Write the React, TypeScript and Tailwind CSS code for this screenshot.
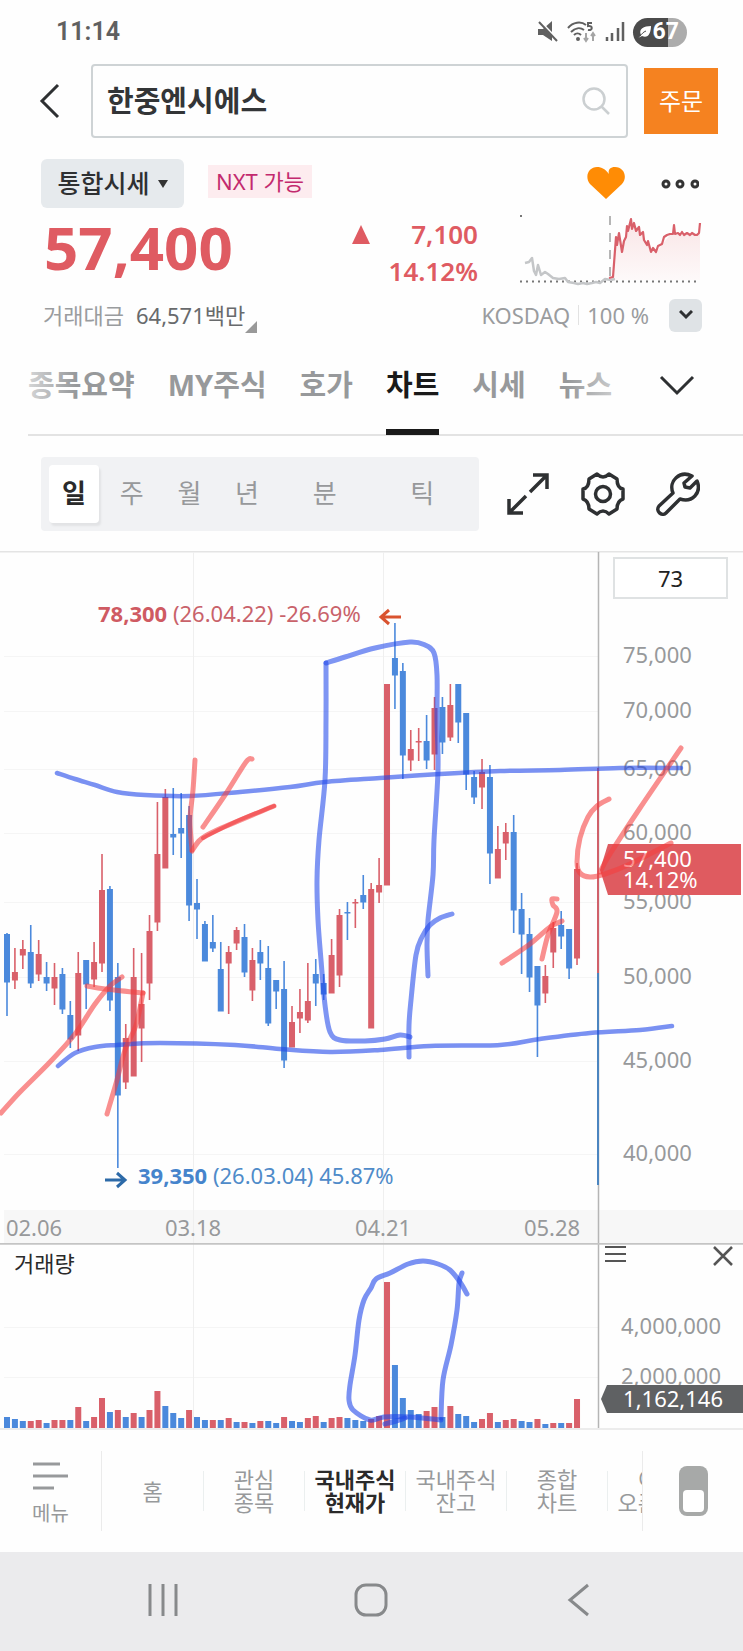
import React from "react";

type Point = [number, number];
type Candle = ["R" | "B", number, number, number, number];

const RED = "#d9606a";
const BLUE = "#4b89dc";
const FIRST_X = 7;
const STEP = 7.917;

// Direction, then high, body top, body bottom and low on the chart's y scale.
const candles: Candle[] = [
  ["B", 933, 934, 982, 1016], ["R", 948, 972, 980, 989], ["R", 940, 949, 955, 969],
  ["B", 925, 952, 983, 988], ["R", 940, 954, 974, 981], ["B", 962, 977, 983, 991],
  ["R", 963, 977, 988, 1005], ["B", 968, 974, 1009, 1014], ["B", 1001, 1015, 1039, 1048],
  ["R", 952, 973, 1035, 1051], ["B", 960, 960, 984, 1009], ["R", 942, 962, 979, 987],
  ["R", 854, 890, 963, 972], ["B", 886, 889, 1000, 1011], ["B", 963, 977, 1095, 1168],
  ["R", 1024, 1038, 1082, 1089], ["R", 948, 977, 1076, 1076], ["R", 953, 1004, 1028, 1062],
  ["R", 915, 931, 983, 1000], ["R", 802, 854, 922, 931], ["R", 789, 797, 868, 868],
  ["B", 788, 834, 837, 855], ["B", 793, 828, 833, 858], ["B", 806, 815, 905, 921],
  ["B", 879, 903, 909, 939], ["B", 921, 924, 961, 961], ["B", 915, 942, 948, 952],
  ["B", 942, 969, 1011, 1011], ["R", 946, 952, 963, 1014], ["R", 927, 930, 943, 950],
  ["B", 924, 937, 972, 977], ["R", 948, 960, 990, 1001], ["B", 940, 952, 963, 980],
  ["B", 946, 968, 1023, 1026], ["B", 980, 980, 991, 1009], ["B", 961, 989, 1060, 1068],
  ["R", 1006, 1022, 1047, 1047], ["R", 989, 1012, 1018, 1033], ["R", 963, 1001, 1020, 1023],
  ["B", 959, 974, 983, 1006], ["B", 974, 983, 994, 1000], ["R", 939, 955, 993, 993],
  ["R", 909, 915, 975, 987], ["B", 902, 912, 913, 940], ["R", 899, 902, 903, 928],
  ["B", 875, 895, 902, 909], ["R", 883, 889, 1028, 1028], ["R", 858, 885, 892, 903],
  ["R", 684, 684, 885, 885], ["B", 623, 658, 675, 709], ["B", 663, 671, 755, 779],
  ["R", 730, 749, 760, 771], ["R", 728, 741, 742, 761], ["B", 715, 741, 760, 769],
  ["R", 697, 708, 754, 770], ["B", 697, 707, 742, 754], ["R", 684, 705, 737, 741],
  ["B", 684, 684, 722, 743], ["B", 713, 713, 774, 790], ["B", 771, 777, 797, 804],
  ["R", 759, 772, 787, 809], ["B", 765, 777, 853, 884], ["R", 826, 849, 878, 878],
  ["R", 823, 832, 843, 860], ["B", 815, 832, 910, 933], ["B", 893, 909, 934, 974],
  ["B", 918, 934, 977, 992], ["B", 966, 966, 1005, 1057], ["R", 965, 976, 993, 1003],
  ["R", 922, 928, 952, 968], ["B", 911, 925, 936, 949], ["B", 929, 929, 968, 979],
  ["R", 863, 869, 958, 965],
];

const volumes: string =
  "B11 B9 B7 R7 R8 B5 R8 R8 B8 R21 B7 R11 R30 B16 R18 B11 R15 B11 R18 R37 B22 B15 B10 R18 B11 B8 R8 B8 R10 B6 R6 B5 R7 B7 B5 R11 B7 B6 R10 R12 B6 R10 R11 B10 B8 B7 R9 R12 R146 B63 B30 B18 B14 R17 R21 B11 R22 B14 B12 B6 R9 R15 B6 R8 R9 B7 B6 R9 B4 R5 B5 R5 R29";

const priceLevels: [string, number][] = [
  ["75,000", 657], ["70,000", 712], ["65,000", 770], ["60,000", 834],
  ["55,000", 903], ["50,000", 978], ["45,000", 1062], ["40,000", 1155],
];

const blueStrokes: Point[][] = [
  [[57, 773], [75, 779], [95, 785], [117, 792], [145, 795], [190, 796], [240, 792], [290, 787], [325, 782], [380, 778], [440, 774], [500, 771], [560, 770], [620, 768], [681, 768]],
  [[58, 1066], [75, 1053], [95, 1047], [117, 1045], [160, 1043], [235, 1045], [280, 1049], [330, 1052], [380, 1050], [430, 1046], [500, 1045], [540, 1039], [590, 1033], [640, 1030], [672, 1026]],
];
const blueBoxStrokes: Point[][] = [
  [[326, 663], [345, 657], [375, 648], [410, 642], [425, 645], [434, 653], [437, 675], [437, 720], [438, 770], [434, 840], [433, 875], [428, 920], [427, 945], [428, 976]],
  [[326, 663], [326, 720], [325, 780], [319, 840], [317, 880], [318, 920], [321, 960], [325, 1005], [330, 1032], [340, 1040], [365, 1041], [385, 1039], [400, 1035], [410, 1037]],
  [[409, 1057], [409, 1025], [411, 1000], [416, 955], [422, 937], [430, 925], [440, 918], [452, 914]],
];
const redStrokes: Point[][] = [
  [[195, 760], [193, 790], [190, 820], [192, 850]],
  [[252, 759], [246, 762], [225, 795], [203, 827]],
  [[192, 851], [200, 840], [215, 831], [274, 806]],
  [[1, 1113], [20, 1092], [50, 1062], [75, 1034], [95, 1004], [110, 986], [122, 977]],
  [[87, 986], [105, 989], [143, 993]],
  [[143, 993], [136, 1025], [125, 1050], [117, 1080], [107, 1114]],
  [[502, 963], [530, 944], [550, 927], [562, 921]],
  [[542, 959], [548, 935], [557, 912], [553, 905], [552, 899], [557, 899]],
  [[609, 799], [597, 806], [588, 817], [580, 838], [577, 862], [580, 873], [590, 877], [605, 874], [630, 864], [671, 843]],
  [[681, 748], [640, 808], [610, 854], [600, 872]],
];
const volumeStrokes: Point[][] = [
  [[462, 1273], [459, 1283], [457, 1310], [451, 1345], [443, 1380], [441, 1418]],
  [[467, 1294], [460, 1282], [450, 1270], [438, 1264], [423, 1261], [408, 1264], [390, 1273], [376, 1279], [371, 1288], [364, 1300], [359, 1320], [355, 1355], [350, 1385], [349, 1400], [353, 1410], [370, 1420], [384, 1417], [410, 1417], [441, 1420]],
  [[385, 1424], [396, 1421], [405, 1418]],
];

function smooth(points: Point[]): string {
  const at = (i: number) => points[Math.max(0, Math.min(points.length - 1, i))];
  let d = `M${points[0][0]} ${points[0][1]}`;
  for (let i = 0; i < points.length - 1; i++) {
    const [a, b, c, e] = [at(i - 1), at(i), at(i + 1), at(i + 2)];
    d += `C${b[0] + (c[0] - a[0]) / 6} ${b[1] + (c[1] - a[1]) / 6} ${c[0] - (e[0] - b[0]) / 6} ${c[1] - (e[1] - b[1]) / 6} ${c[0]} ${c[1]}`;
  }
  return d;
}

function Pen({ strokes, color, width, opacity }: { strokes: Point[][]; color: string; width: number; opacity: number }) {
  return (
    <g fill="none" stroke={color} strokeWidth={width} strokeOpacity={opacity} strokeLinecap="round" strokeLinejoin="round">
      {strokes.map((s, i) => (
        <path key={i} d={smooth(s)} />
      ))}
    </g>
  );
}

function StatusBar() {
  return (
    <div className="flex h-16 items-center justify-between px-14 text-[#606060]">
      <span className="font-[Roboto] text-[25px] font-semibold">11:14</span>
      <div className="flex items-center gap-2">
        <svg width="22" height="22" viewBox="0 0 22 22" aria-label="무음">
          <path d="M1 8h5l9-8v20l-9-6H1z" fill="#606060" />
          <path d="M3 0l19 20" stroke="#fff" strokeWidth="2" />
          <path d="M2 1l18 19" stroke="#606060" strokeWidth="2" />
        </svg>
        <svg width="30" height="22" viewBox="0 0 30 22" fill="none" stroke="#606060" strokeWidth="2" aria-label="와이파이">
          <path d="M1 7c5-6 13-7 18-3M4 11c4-4 9-5 13-2M7 14c2-2 5-2 7 0" />
          <circle cx="11" cy="18" r="1" fill="#606060" />
          <path d="M25 2h-4v3c5-1 5 5 0 4" strokeWidth="2" />
          <path d="M19 12v7m-2-2l2 3 2-3M26 20v-7m-2 2l2-3 2 3" stroke="#a5a5a5" />
        </svg>
        <svg width="20" height="22" viewBox="0 0 20 22" stroke="#606060" strokeWidth="2.500" aria-label="신호">
          <path d="M2 16v4M7 12v8M13 7v13M18 1v19" />
        </svg>
        <div className="flex h-[29px] items-center gap-px overflow-hidden rounded-full bg-linear-to-r from-[#4b4b4b] from-65% to-[#acacac] to-65% pl-1 pr-2 font-[Roboto] text-[23px] font-bold text-white">
          <svg width="15" height="14" viewBox="0 0 15 14">
            <path d="M1 13c2-1 2-2 3-3-3-6 3-9 10-9 0 7-3 13-9 10" fill="#fff" />
            <path d="M3 11c2-2 3-4 6-5" stroke="#4b4b4b" fill="none" />
          </svg>
          67
        </div>
      </div>
    </div>
  );
}

function Header() {
  return (
    <header className="flex items-center pl-[38px] pr-[25px]">
      <button aria-label="뒤로" className="w-[53px]">
        <svg width="24" height="36" viewBox="0 0 24 36" fill="none" stroke="#2e3032" strokeWidth="3">
          <path d="M20 2L4 18l16 16" />
        </svg>
      </button>
      <label className="flex h-[74px] flex-1 items-center rounded-sm border-2 border-[#ced3d5] pr-4 pl-[14px]">
        <input aria-label="종목 검색" defaultValue="한중엔시에스" className="w-full min-w-0 flex-1 text-[29px] font-bold text-[#333537] outline-none" />
        <svg width="28" height="28" viewBox="0 0 28 28" fill="none" stroke="#cbcfd1" strokeWidth="2.5">
          <circle cx="12" cy="12" r="10.500" />
          <path d="M19 19l8 8" />
        </svg>
      </label>
      <button className="ml-4 h-[66px] w-[74px] bg-[#f58220] text-[24px] text-white">주문</button>
    </header>
  );
}

function Sparkline() {
  return (
    <svg width="190" height="76" viewBox="516 212 190 76" fill="none" strokeLinejoin="round" aria-label="당일 추이">
      <defs>
        <linearGradient id="area" x1="0" y1="0" x2="0" y2="1">
          <stop offset="0" stopColor="#e05a5f" stopOpacity="0.150" />
          <stop offset="1" stopColor="#e05a5f" stopOpacity="0.030" />
        </linearGradient>
      </defs>
      <path d="M520 217h2" stroke="#777" strokeWidth="2" />
      <path d="M610 217v64" stroke="#b5b5b5" strokeWidth="2" strokeDasharray="9 8" />
      <path d="M520 282.500h178" stroke="#777" strokeWidth="2" strokeDasharray="2 4" />
      <path d="M613 279L616 240L622 248L631 222L640 232L651 252L657 252L670 236L700 234V281H613z" fill="url(#area)" />
      <path d="M525 264l4-1 3-4 2 13 2 4 2-10 3 10 4-3 3 2 5 4 6 1 6-1 3 4 6 1 4 1 5-1 4 1 5-1 4-1 4 1 5-4 6 1 4-1" stroke="#c4c6c8" strokeWidth="2.500" />
      <path
        d="M609 279L613 278L616 238L617 246L619 234L622 253L624 242L626 238L627 227L628 232L631 220L632 230L634 224L636 232L639 228L640 236L643 233L644 241L647 246L648 242L651 253L653 249L656 253L658 247L662 245L664 238L667 236L670 235L673 235L674 226L675 235L678 234L680 236L682 233L684 236L687 234L690 236L692 234L695 236L697 236L699 234L700 224"
        stroke="#d9606a"
        strokeWidth="2.200"
      />
    </svg>
  );
}

function Quote() {
  return (
    <section>
      <div className="flex h-[49px] items-center pl-[41px] pr-11">
        <button className="flex h-[49px] w-[143px] items-center justify-center gap-2 rounded-md bg-[#e6eaed] text-[25px] font-medium text-[#2e3032]">
          통합시세
          <svg width="10" height="8" viewBox="0 0 10 8"><path d="M0 0h10L5 8z" fill="#333" /></svg>
        </button>
        <span className="mb-1 ml-6 flex h-[33px] items-center bg-[#fdecef] px-2 text-[22px] text-[#c32a6e]">NXT 가능</span>
        <button aria-label="관심종목" className="ml-auto">
          <svg width="38" height="33" viewBox="0 0 38 33">
            <path d="M19 32L3 17C-3 9 2 0 10 0c5 0 8 2 12 7-1-3 0-7 6-7 9 0 13 10 7 17z" fill="#ff8c05" />
          </svg>
        </button>
        <button aria-label="더보기" className="ml-9">
          <svg width="38" height="10" viewBox="0 0 38 10" fill="none" stroke="#333" strokeWidth="3">
            <circle cx="5" cy="5" r="3" /><circle cx="19" cy="5" r="3" /><circle cx="34" cy="5" r="3" />
          </svg>
        </button>
      </div>
      <div className="flex h-[82px] items-center pl-11 pr-[37px] text-[#df5b62]">
        <strong className="flex-1 pb-1 text-[60px] leading-none font-bold">57,400</strong>
        <div className="flex h-[74px] w-[126px] items-start justify-between">
          <svg width="18" height="19" viewBox="0 0 18 19" className="mt-[13px]"><path d="M9 0l9 19H0z" fill="#df5b62" /></svg>
          <div className="pt-1 text-right text-[26px] leading-[37px] font-semibold">
            <div>7,100</div>
            <div>14.12%</div>
          </div>
        </div>
        <div className="ml-[38px]"><Sparkline /></div>
      </div>
      <div className="flex h-[50px] items-center pl-[43px] pr-[41px] text-[22px] text-[#9a9c9e]">
        <span>거래대금</span>
        <span className="ml-3 text-[#686a6c]">64,571백만</span>
        <svg width="12" height="12" viewBox="0 0 12 12" className="mt-6"><path d="M12 0v12H0z" fill="#999" /></svg>
        <span className="ml-auto">KOSDAQ</span>
        <span className="mx-2 h-5 w-px bg-[#e2e2e2]" />
        <span>100 %</span>
        <button aria-label="펼치기" className="ml-5 flex size-[33px] items-center justify-center rounded-md bg-[#dfe3e6]">
          <svg width="14" height="10" viewBox="0 0 14 10" fill="none" stroke="#2e3032" strokeWidth="3"><path d="M1 1l6 6 6-6" /></svg>
        </button>
      </div>
    </section>
  );
}

const tabs = ["종목요약", "MY주식", "호가", "차트", "시세", "뉴스"];

function Tabs() {
  return (
    <nav className="ml-7 flex h-[95px] items-stretch border-b-2 border-[#e3e3e3] pr-12">
      <div className="relative flex flex-1 gap-[33px]">
        {tabs.map((t) => (
          <a
            key={t}
            href="#chart"
            className={
              t === "차트"
                ? "-mb-px border-b-6 border-[#1a1a1a] pt-[22px] text-[29px] font-bold whitespace-nowrap text-[#1a1a1a]"
                : "pt-[22px] text-[29px] font-bold whitespace-nowrap text-[#97999b]"
            }
          >
            {t}
          </a>
        ))}
        <span className="absolute inset-y-0 left-0 w-12 bg-linear-to-r from-[#fefefe]/60 to-transparent" />
        <span className="absolute top-0 right-9 bottom-1 w-14 bg-linear-to-l from-[#fefefe]/60 to-transparent" />
      </div>
      <button aria-label="탭 더보기" className="pb-1">
        <svg width="36" height="24" viewBox="0 0 36 24" fill="none" stroke="#2e3032" strokeWidth="3"><path d="M2 3l16 16L34 3" /></svg>
      </button>
    </nav>
  );
}

const periods = ["주", "월", "년"];

function Toolbar() {
  return (
    <div className="flex h-[115px] items-center pl-[41px] pr-[43px]">
      <div className="flex h-[74px] w-[438px] items-center rounded bg-[#f1f2f4] px-2 text-[26px] text-[#97999b]">
        <button className="mr-1 h-[58px] w-[50px] rounded bg-white font-bold text-[#2a2a2a] shadow-[2px_3px_2px_#e2e3e5]">일</button>
        {periods.map((p) => (
          <button key={p} className="w-[58px]">{p}</button>
        ))}
        <button className="w-[98px]">분</button>
        <button className="w-[98px]">틱</button>
      </div>
      <div className="flex flex-1 justify-between pl-7">
        <button aria-label="전체화면">
          <svg width="42" height="42" viewBox="0 0 42 42" fill="none" stroke="#2e3032" strokeWidth="3.500">
            <path d="M2 26v14h14M2 40l17-17M26 2h14v14M40 2L23 19" />
          </svg>
        </button>
        <button aria-label="차트 설정">
          <svg width="44" height="44" viewBox="0 0 44 44" fill="none" stroke="#2e3032" strokeWidth="3.500" strokeLinejoin="round">
            <path d="M16 2q6 6 12 0l8 5q0 9 6 10v10q-6 2-6 10l-8 5q-6-6-12 0l-8-5q0-8-6-10V17q6-1 6-10z" />
            <circle cx="22" cy="22" r="7.500" />
          </svg>
        </button>
        <button aria-label="도구">
          <svg width="44" height="44" viewBox="0 0 44 44" fill="none" stroke="#2e3032" strokeWidth="3.500" strokeLinejoin="round">
            <path d="M36 4C24-2 12 9 17 21L3 34c-4 5 3 11 7 7l14-14c12 4 22-6 17-18l-7 7-5-1-1-4z" />
          </svg>
        </button>
      </div>
    </div>
  );
}

function PriceChart() {
  return (
    <section id="chart" className="relative">
      <svg viewBox="0 551 743 692" className="block h-auto w-full" fontFamily="'Noto Sans', sans-serif" fontSize="22">
        <rect x="4" y="1210" width="739" height="33" fill="#f7f7f7" />
        <path d="M0 551.500h743" stroke="#e4e4e4" strokeWidth="2" />
        <g stroke="#f5f5f5" strokeWidth="1">
          {priceLevels.map(([label, y]) => (
            <path key={label} d={`M4 ${y - 0.5}H598`} />
          ))}
          <path d="M193.500 552v691M383.500 552v691" stroke="#efefef" />
        </g>
        {candles.map(([dir, high, top, bottom, low], i) => {
          const x = FIRST_X + i * STEP;
          const color = dir === "R" ? RED : BLUE;
          return (
            <g key={i}>
              <path d={`M${x} ${high}V${low}`} stroke={color} strokeWidth="1.600" />
              <rect x={x - 3} y={top} width="6" height={bottom - top + 0.5} fill={color} />
            </g>
          );
        })}
        <path d="M598.500 552v691" stroke="#b5b5b5" strokeWidth="1.500" />
        <path d="M598 768v205" stroke="#d0606a" strokeWidth="2" />
        <path d="M598 973v212" stroke="#4b85c0" strokeWidth="2" />
        <g fill="#97999b">
          {priceLevels.map(([label, y]) => (
            <text key={label} x="623" y={y + 6}>{label}</text>
          ))}
          <text x="34" y="1236" textAnchor="middle">02.06</text>
          <text x="193" y="1236" textAnchor="middle">03.18</text>
          <text x="383" y="1236" textAnchor="middle">04.21</text>
          <text x="552" y="1236" textAnchor="middle">05.28</text>
        </g>
        <text x="98" y="622" fill="#c9626a">
          <tspan fontWeight="700" fill="#cf5a62">78,300</tspan> (26.04.22) -26.69%
        </text>
        <path d="M401 617h-19m7-7l-8 7 8 7" fill="none" stroke="#d9532f" strokeWidth="3" />
        <text x="138" y="1184" fill="#4f8bc9">
          <tspan fontWeight="700" fill="#4584cc">39,350</tspan> (26.03.04) 45.87%
        </text>
        <path d="M105 1180h19m-7-7l8 7-8 7" fill="none" stroke="#2d6aa8" strokeWidth="3" />
        <path d="M600 870l8-26h133v51H608z" fill="#df5b60" />
        <text x="623" y="867" fill="#fff">57,400</text>
        <text x="623" y="888" fill="#fff">14.12%</text>
        <Pen strokes={blueStrokes} color="#2148ea" width={4.5} opacity={0.6} />
        <Pen strokes={blueBoxStrokes} color="#2148ea" width={5} opacity={0.58} />
        <Pen strokes={redStrokes} color="#f43e3e" width={5} opacity={0.58} />
        <path d={smooth([[203, 838], [235, 822], [274, 806]])} fill="none" stroke="#f03a3e" strokeWidth="4" strokeOpacity="0.600" strokeLinecap="round" />
      </svg>
      <input
        aria-label="표시 봉 개수"
        readOnly
        value="73"
        className="absolute top-[6px] right-[15px] h-[42px] w-[115px] border-2 border-[#dfe2e3] bg-white text-center text-[22px] text-[#222] outline-none"
      />
    </section>
  );
}

function VolumeChart() {
  return (
    <section className="relative">
      <svg viewBox="0 1243 743 187" className="block h-auto w-full" fontFamily="'Noto Sans', sans-serif" fontSize="22">
        <g stroke="#f5f5f5">
          <path d="M4 1327.500h594M4 1377.500h594" />
          <path d="M193.500 1243v185M383.500 1243v185" stroke="#efefef" />
        </g>
        {volumes.split(" ").map((v, i) => {
          const h = Number(v.slice(1));
          return <rect key={i} x={FIRST_X + i * STEP - 3} y={1428 - h} width="6" height={h} fill={v[0] === "R" ? RED : BLUE} />;
        })}
        <path d="M0 1429h743" stroke="#ececec" strokeWidth="2" />
        <path d="M598.500 1243v185" stroke="#b5b5b5" strokeWidth="1.500" />
        <path d="M0 1243.500h743" stroke="#c4c4c4" strokeWidth="2.500" />
        <text x="721" y="1334" textAnchor="end" fill="#97999b">4,000,000</text>
        <text x="721" y="1384" textAnchor="end" fill="#97999b">2,000,000</text>
        <path d="M601 1399l6-14h136v28H607z" fill="#5f6163" />
        <text x="723" y="1407" textAnchor="end" fill="#fff">1,162,146</text>
        <Pen strokes={volumeStrokes} color="#2148ea" width={5} opacity={0.6} />
      </svg>
      <h2 className="absolute top-1 left-[14px] text-[22px] leading-8 text-[#2a2a2a]">거래량</h2>
      <button aria-label="지표 메뉴" className="absolute top-[3px] right-[117px]">
        <svg width="21" height="16" viewBox="0 0 21 16" stroke="#555" strokeWidth="2"><path d="M0 1h21M0 8h21M0 15h21" /></svg>
      </button>
      <button aria-label="닫기" className="absolute top-[3px] right-[10px]">
        <svg width="20" height="20" viewBox="0 0 20 20" stroke="#555" strokeWidth="2.500"><path d="M1 1l18 18M19 1L1 19" /></svg>
      </button>
    </section>
  );
}

const shortcuts: string[][] = [["홈"], ["관심", "종목"], ["국내주식", "현재가"], ["국내주식", "잔고"], ["종합", "차트"], ["이체", "오픈뱅킹"]];

function BottomMenu() {
  return (
    <nav className="flex h-[122px] items-center text-[22px] leading-[23px] text-[#97999b]">
      <button className="flex h-[116px] w-[101px] flex-col items-start justify-center gap-3 pt-1 pl-8">
        <svg width="36" height="28" viewBox="0 0 36 28" stroke="#97999b" strokeWidth="3"><path d="M1 2h27M1 14h35M1 26h21" /></svg>
        <span className="text-[20px]">메뉴</span>
      </button>
      <div className="flex h-20 min-w-0 flex-1 items-center overflow-hidden border-x border-[#ebebeb]">
        {shortcuts.map((lines, i) => (
          <a
            key={i}
            href="#chart"
            className={
              i === 2
                ? "flex h-10 w-[101px] shrink-0 flex-col items-center justify-center border-l border-[#ebefef] font-bold whitespace-nowrap text-[#2a2a2a]"
                : i === 0
                  ? "flex h-10 w-[101px] shrink-0 flex-col items-center justify-center whitespace-nowrap"
                  : "flex h-10 w-[101px] shrink-0 flex-col items-center justify-center border-l border-[#ebefef] whitespace-nowrap"
            }
          >
            {lines.map((l) => (
              <span key={l}>{l}</span>
            ))}
          </a>
        ))}
      </div>
      <div className="flex w-[100px] justify-center">
        <button aria-label="화면 분할" className="h-[50px] w-[29px] rounded-lg bg-[#a7a9a8] px-1 pt-5">
          <span className="block h-[22px] rounded bg-white" />
        </button>
      </div>
    </nav>
  );
}

function SystemNav() {
  return (
    <nav className="flex h-[99px] justify-between bg-[#ebebed] pr-[152px] pl-[147px] pb-1">
      <button aria-label="최근 앱">
        <svg width="32" height="32" viewBox="0 0 32 32" stroke="#87898b" strokeWidth="3"><path d="M3 0v32M16 0v32M29 0v32" /></svg>
      </button>
      <button aria-label="홈 화면" className="pr-1">
        <svg width="34" height="34" viewBox="0 0 34 34" fill="none" stroke="#87898b" strokeWidth="3"><rect x="2" y="2" width="30" height="30" rx="10" /></svg>
      </button>
      <button aria-label="이전">
        <svg width="24" height="34" viewBox="0 0 24 34" fill="none" stroke="#87898b" strokeWidth="3"><path d="M21 2L3 17l18 15" /></svg>
      </button>
    </nav>
  );
}

export default function App() {
  return (
    <main className="min-h-screen overflow-x-hidden bg-[#fefefe] font-['Noto_Sans','Noto_Sans_CJK_KR',sans-serif]">
      <StatusBar />
      <Header />
      <div className="h-[21px]" />
      <Quote />
      <div className="h-px" />
      <Tabs />
      <Toolbar />
      <PriceChart />
      <VolumeChart />
      <BottomMenu />
      <SystemNav />
    </main>
  );
}
